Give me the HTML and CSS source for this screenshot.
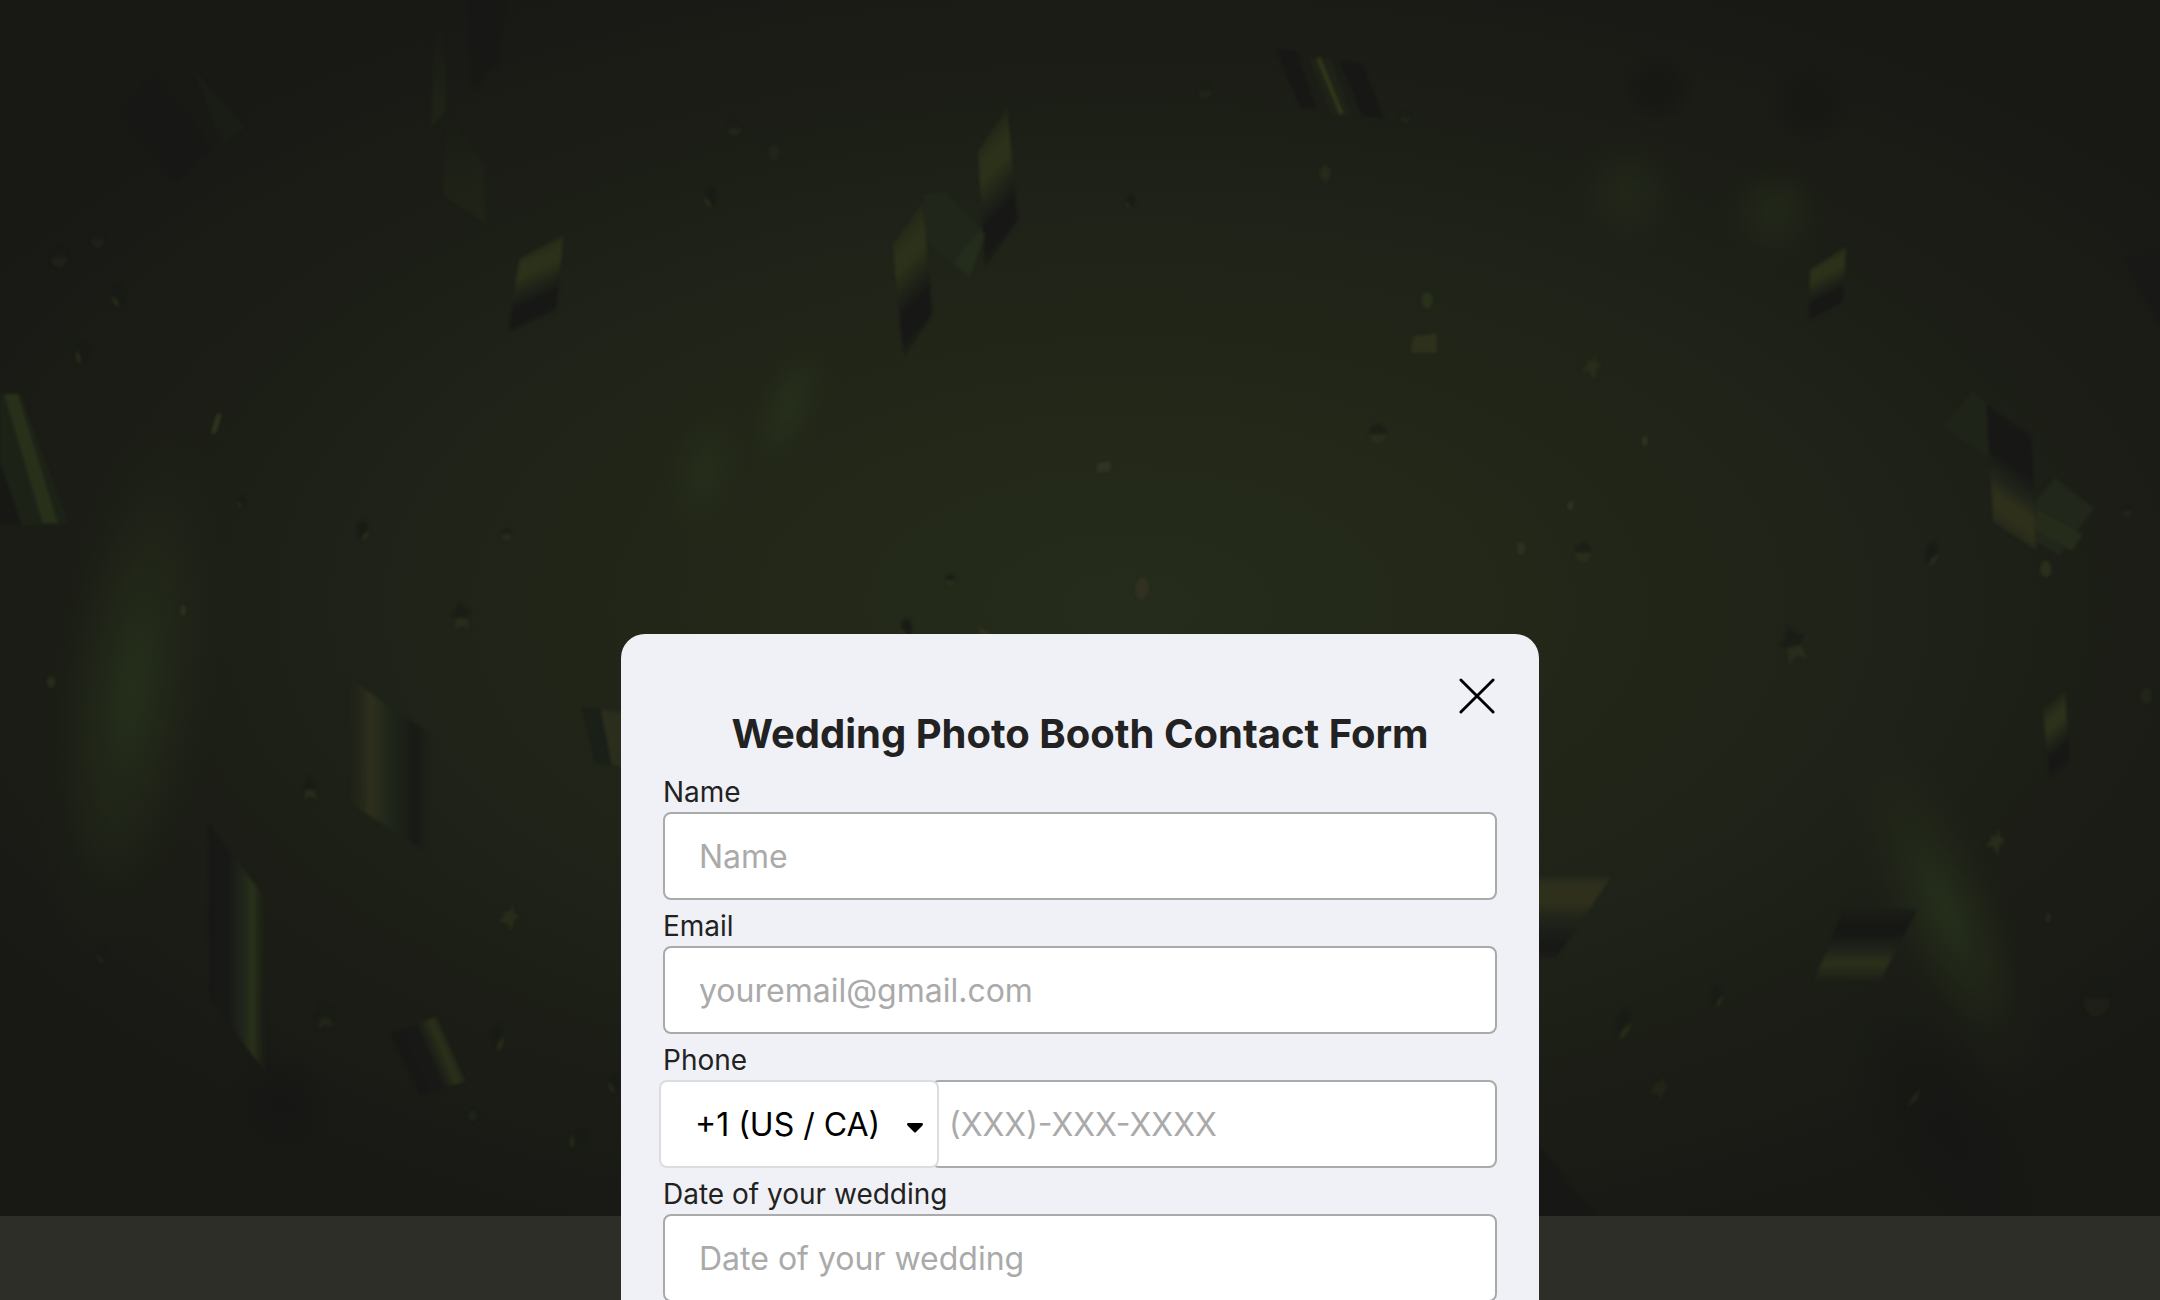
FILE: index.html
```html
<!DOCTYPE html>
<html lang="en">
<head>
  <meta charset="UTF-8">
  <meta name="viewport" content="width=device-width, initial-scale=1">
  <title>Wedding Photo Booth</title>
  <link rel="stylesheet" href="styles.css">
</head>
<body>
  <div class="hero">
    <svg class="confetti" viewBox="0 0 1568 883" preserveAspectRatio="xMidYMin slice" aria-hidden="true">
      <defs>
        <radialGradient id="glow" gradientUnits="userSpaceOnUse" cx="0" cy="0" r="1" gradientTransform="translate(820 440) scale(960 500)">
          <stop offset="0" stop-color="#252c1b"/>
          <stop offset="0.38" stop-color="#222618"/>
          <stop offset="0.62" stop-color="#1e2118"/>
          <stop offset="0.85" stop-color="#1a1c15"/>
          <stop offset="1" stop-color="#181815"/>
        </radialGradient>
        <radialGradient id="haze">
          <stop offset="0" stop-color="#27321b"/>
          <stop offset="0.4" stop-color="#252e1a" stop-opacity="0.7"/>
          <stop offset="0.75" stop-color="#222918" stop-opacity="0.2"/>
          <stop offset="1" stop-color="#222918" stop-opacity="0"/>
        </radialGradient>
        <radialGradient id="shade">
          <stop offset="0" stop-color="#161614"/>
          <stop offset="0.4" stop-color="#161614" stop-opacity="0.8"/>
          <stop offset="1" stop-color="#161614" stop-opacity="0"/>
        </radialGradient>
        <linearGradient id="down" x1="0.37" y1="0" x2="0.63" y2="1">
          <stop offset="0.05" stop-color="#2b3119" stop-opacity="0"/>
          <stop offset="0.24" stop-color="#2a301a"/>
          <stop offset="0.36" stop-color="#2c3219"/>
          <stop offset="0.52" stop-color="#1f2318"/>
          <stop offset="0.65" stop-color="#171815"/>
          <stop offset="0.8" stop-color="#171815"/>
          <stop offset="1" stop-color="#1c1f17" stop-opacity="0.4"/>
        </linearGradient>
        <linearGradient id="up" x1="0.62" y1="0" x2="0.38" y2="1">
          <stop offset="0.05" stop-color="#171815" stop-opacity="0.4"/>
          <stop offset="0.2" stop-color="#171815"/>
          <stop offset="0.42" stop-color="#171815"/>
          <stop offset="0.58" stop-color="#20251a"/>
          <stop offset="0.68" stop-color="#2f301b"/>
          <stop offset="0.8" stop-color="#2d2f1b"/>
          <stop offset="1" stop-color="#22271a" stop-opacity="0.2"/>
        </linearGradient>
        <linearGradient id="flatDown" x1="0" y1="0" x2="0" y2="1">
          <stop offset="0" stop-color="#20281a"/>
          <stop offset="0.12" stop-color="#2f301c"/>
          <stop offset="0.32" stop-color="#2f301c"/>
          <stop offset="0.5" stop-color="#20251a"/>
          <stop offset="0.85" stop-color="#171815"/>
          <stop offset="1" stop-color="#1a1c16"/>
        </linearGradient>
        <linearGradient id="flatUp" x1="0" y1="0" x2="0" y2="1">
          <stop offset="0" stop-color="#1a1c16"/>
          <stop offset="0.2" stop-color="#171815"/>
          <stop offset="0.35" stop-color="#171815"/>
          <stop offset="0.6" stop-color="#20241a"/>
          <stop offset="0.75" stop-color="#2a3119"/>
          <stop offset="1" stop-color="#1c2017"/>
        </linearGradient>
        <linearGradient id="lightDark" x1="0" y1="0" x2="1" y2="0">
          <stop offset="0" stop-color="#1f2318" stop-opacity="0"/>
          <stop offset="0.27" stop-color="#2e301b"/>
          <stop offset="0.5" stop-color="#20261a"/>
          <stop offset="0.82" stop-color="#171a15"/>
          <stop offset="1" stop-color="#1d2117"/>
        </linearGradient>
        <linearGradient id="darkLight" x1="0" y1="0" x2="1" y2="0">
          <stop offset="0.05" stop-color="#171815"/>
          <stop offset="0.35" stop-color="#181916"/>
          <stop offset="0.6" stop-color="#20251a"/>
          <stop offset="0.78" stop-color="#2a3119"/>
          <stop offset="1" stop-color="#1c2017" stop-opacity="0.2"/>
        </linearGradient>
        <linearGradient id="slant" x1="0.05" y1="0.4" x2="0.95" y2="0">
          <stop offset="0.15" stop-color="#171815"/>
          <stop offset="0.4" stop-color="#181916"/>
          <stop offset="0.6" stop-color="#2a3119"/>
          <stop offset="0.75" stop-color="#1c2017"/>
        </linearGradient>
        <linearGradient id="fade" x1="0" y1="0" x2="0" y2="1">
          <stop offset="0" stop-color="#1f2417" stop-opacity="0"/>
          <stop offset="1" stop-color="#1f2417"/>
        </linearGradient>
        <filter id="edge" color-interpolation-filters="sRGB">
          <feGaussianBlur stdDeviation="1"/>
        </filter>
        <g id="dot">
          <path d="M-6 0a6 7 0 0 1 12 0z" fill="#1a1e17"/>
          <path d="M-6 0a6 7 0 0 0 12 0z" fill="#2b2f1e"/>
        </g>
        <g id="flake">
          <ellipse cx="1" cy="-1" rx="4" ry="7" fill="#181b16"/>
          <path d="M-4 -2q0 7 5 9q1 -2 -1 -5z" fill="#2b301b"/>
        </g>
        <path id="star" d="M3 -10l1 7l4 2l-4 3l-2 8l-3 -6l-6 -1l4 -4l0 -4l4 1z" fill="#2b301b"/>
        <g id="twoStar">
          <path d="M-1 -11l3 6l5 1l-4 5h-7l-4 -1l4 -4z" fill="#191c16"/>
          <path d="M-4 2h8l2 8l-6 -3l-5 4z" fill="#2b2f1e"/>
        </g>
      </defs>

      <rect width="1568" height="883" fill="url(#glow)"/>

      <!-- out of focus pieces -->
      <ellipse cx="96" cy="500" rx="62" ry="200" fill="url(#haze)" opacity="0.8" transform="rotate(8 96 500)"/>
      <ellipse cx="572" cy="296" rx="30" ry="66" fill="url(#haze)" opacity="0.8" transform="rotate(22 572 296)"/>
      <ellipse cx="512" cy="342" rx="36" ry="62" fill="url(#haze)" opacity="0.6" transform="rotate(12 512 342)"/>
      <ellipse cx="1412" cy="660" rx="46" ry="140" fill="url(#haze)" opacity="0.8" transform="rotate(-24 1412 660)"/>
      <ellipse cx="1415" cy="822" rx="54" ry="125" fill="url(#shade)" opacity="0.8" transform="rotate(-32 1415 822)"/>
      <ellipse cx="1182" cy="140" rx="42" ry="46" fill="url(#haze)" opacity="0.4"/>
      <ellipse cx="1288" cy="154" rx="40" ry="40" fill="url(#haze)" opacity="0.5"/>
      <circle cx="1203" cy="64" r="28" fill="url(#shade)" opacity="0.8"/>
      <circle cx="1313" cy="76" r="32" fill="url(#shade)" opacity="0.8"/>
      <ellipse cx="205" cy="803" rx="38" ry="42" fill="url(#shade)" opacity="0.8" transform="rotate(-20 205 803)"/>

      <!-- ribbons -->
      <g filter="url(#edge)">
        <path d="M112 54l40 52l-24 26l-42 -50z" fill="#171815"/>
        <path d="M140 50l38 42l-16 14z" fill="#1a1d15"/>
        <path d="M315 14l8 10l1 56l-11 12z" fill="url(#fade)"/>
        <path d="M324 80l28 40v41l-30 -19z" fill="url(#fade)"/>
        <path d="M340 0h27l-6 46l-18 19z" fill="#171815"/>
        <path d="M377 188l32 -17l-5 54l-35 16z" fill="url(#down)"/>
        <path d="M710 110l21 -32l8 82l-24 34z" fill="url(#down)"/>
        <path d="M671 141l15 -2l29 31l-12 33l-30 -28z" fill="#20271a"/>
        <path d="M693 190l19 -24l3 6l-11 29z" fill="#242c1b"/>
        <path d="M648 178l22 -32l7 82l-21 32z" fill="url(#down)"/>
        <path d="M926 36l15 1l15 42h-12z" fill="#171815"/>
        <path d="M972 44l17 2l16 40l-16 -2z" fill="#171815"/>
        <path d="M950 42l16 0l15 42h-14z" fill="#1e2217"/>
        <path d="M957 42l17 41" stroke="#333719" stroke-width="3"/>
        <path d="M1314 196l26 -17l-2 40l-25 14z" fill="url(#down)"/>
        <path d="M1410 310l22 -26l10 9l1 39z" fill="#1f2418"/>
        <path d="M1477 364l15 -17l28 22l-25 34l-17 -10z" fill="#21271a"/>
        <path d="M1478 370l34 18l-8 12l-26 -16z" fill="#252d1a"/>
        <path d="M1442 293l33 23l3 83l-31 -20z" fill="url(#up)"/>
        <path d="M1542 187l26 -6v56z" fill="#181916"/>
        <path d="M0 286h15l35 94l-50 2z" fill="#1d2217"/>
        <path d="M0 335l16 46h-16z" fill="#171815"/>
        <path d="M3 286h10l29 94h-11z" fill="#28301a"/>
        <path d="M252 491l60 42v87l-58 -37z" fill="url(#lightDark)"/>
        <path d="M151 597l42 56v126l-41 -55z" fill="url(#darkLight)"/>
        <path d="M283 750l34 -12l21 47l-33 10z" fill="url(#slant)"/>
        <path d="M422 513l30 4v40l-20 -3z" fill="#1a1f17"/>
        <path d="M436 515l16 2v40l-8 -2z" fill="#2b2e1d"/>
        <path d="M1100 636h70l-40 59h-30z" fill="url(#flatDown)"/>
        <path d="M1338 660h54l-27 52h-48z" fill="url(#flatUp)"/>
        <path d="M1483 515l16 -13l4 55l-15 11z" fill="url(#down)"/>
        <path d="M1117 831l41 52h-41z" fill="#171815"/>
      </g>

      <!-- small pieces -->
      <g opacity="0.85" filter="url(#edge)">
        <use href="#dot" x="1000" y="315"/>
        <use href="#dot" x="1149" y="401"/>
        <use href="#dot" x="43" y="187" opacity="0.5"/>
        <use href="#dot" transform="translate(71 174) scale(0.8)" opacity="0.5"/>
        <use href="#dot" transform="translate(368 388) scale(0.6)"/>
        <use href="#dot" transform="translate(533 93) scale(0.8)" opacity="0.6"/>
        <use href="#dot" transform="translate(875 66) scale(0.8)" opacity="0.5"/>
        <use href="#dot" transform="translate(1020 85) scale(0.6)" opacity="0.5"/>
        <use href="#dot" transform="translate(1544 371) scale(0.6)" opacity="0.6"/>
        <use href="#dot" transform="translate(690 421) scale(0.6)"/>
        <use href="#dot" transform="translate(1522 725) scale(1.6 1.9)" opacity="0.4"/>
        <use href="#flake" x="85" y="216"/>
        <use href="#flake" transform="translate(59 257) rotate(20)"/>
        <use href="#flake" x="515" y="144"/>
        <use href="#flake" transform="translate(175 365) scale(0.6)"/>
        <use href="#flake" transform="translate(264 386) scale(-1 1)"/>
        <use href="#flake" transform="translate(820 147) scale(0.7)"/>
        <use href="#flake" transform="translate(1403 403) rotate(12) scale(-1 1.2)"/>
        <use href="#flake" transform="translate(1179 744) rotate(12) scale(-1.2 1.5)"/>
        <use href="#flake" transform="translate(1247 724) scale(-0.9 1)"/>
        <use href="#flake" transform="translate(362 754) scale(-1 1.3)"/>
        <use href="#flake" transform="translate(445 787) scale(0.9)"/>
        <use href="#flake" transform="translate(418 827) rotate(35)"/>
        <use href="#flake" transform="translate(657 457)"/>
        <use href="#flake" transform="translate(74 694) scale(0.9)" opacity="0.6"/>
        <use href="#star" x="1155" y="266"/>
        <use href="#star" x="369" y="666"/>
        <use href="#star" x="1448" y="611"/>
        <use href="#star" x="1204" y="790" opacity="0.5"/>
        <use href="#twoStar" x="335" y="447"/>
        <use href="#twoStar" transform="translate(225 572) scale(0.8)"/>
        <use href="#twoStar" transform="translate(236 737)" opacity="0.6"/>
        <use href="#twoStar" transform="translate(1302 467) rotate(-12) scale(1.3)"/>
        <ellipse cx="829" cy="427" rx="5" ry="8" fill="#333322" transform="rotate(8 829 427)"/>
        <ellipse cx="1036" cy="218" rx="4" ry="6" fill="#2b351d"/>
        <path d="M1026 244l17 -2v14h-19z" fill="#30341e"/>
        <path d="M797 336l9 -1v7l-10 1z" fill="#343625"/>
        <ellipse cx="962" cy="126" rx="4" ry="6" fill="#282c1b"/>
        <ellipse cx="562" cy="111" rx="4" ry="6" fill="#22261a"/>
        <path d="M157 301l4 -1l-4 14l-4 1z" fill="#333a20"/>
        <ellipse cx="1194" cy="320" rx="2" ry="4" fill="#333822"/>
        <ellipse cx="1104" cy="398" rx="3" ry="5" fill="#303421"/>
        <ellipse cx="1140" cy="367" rx="2" ry="3" fill="#333824"/>
        <ellipse cx="1485" cy="413" rx="4" ry="6" fill="#2e331c"/>
        <ellipse cx="1558" cy="505" rx="4" ry="6" fill="#23281a"/>
        <ellipse cx="1487" cy="666" rx="2" ry="4" fill="#262b1c"/>
        <ellipse cx="37" cy="495" rx="3" ry="4" fill="#2a301d"/>
        <ellipse cx="133" cy="443" rx="2" ry="4" fill="#2f3520"/>
        <ellipse cx="343" cy="810" rx="3" ry="4" fill="#21251c"/>
        <path d="M1388 796l6 -6l-2 8l-8 6z" fill="#24291c"/>
        <path d="M710 454l14 10h-12z" fill="#333422"/>
      </g>
    </svg>
  </div>

  <div class="modal">
    <form class="panel">
      <button class="close" type="button" aria-label="Close">
        <svg viewBox="0 0 38 38"><path d="M2 2l34 34M36 2l-34 34"/></svg>
      </button>
      <h2 class="title">Wedding Photo Booth Contact Form</h2>
      <div class="field">
        <label for="name">Name</label>
        <input class="text" id="name" type="text" placeholder="Name">
      </div>
      <div class="field">
        <label for="email">Email</label>
        <input class="text" id="email" type="email" placeholder="youremail@gmail.com">
      </div>
      <div class="field">
        <label for="phone">Phone</label>
        <div class="phone">
          <div class="code">
            <select aria-label="Country code">
              <option>+1 (US / CA)</option>
            </select>
            <svg class="caret" viewBox="0 0 16 10"><path d="M1 0h14q2 1 0 3l-6 6q-1 1 -2 0l-6 -6q-2 -2 0 -3z"/></svg>
          </div>
          <input class="text number" id="phone" type="tel" placeholder="(XXX)-XXX-XXXX">
        </div>
      </div>
      <div class="field">
        <label for="date">Date of your wedding</label>
        <input class="text" id="date" type="text" placeholder="Date of your wedding">
      </div>
    </form>
  </div>
</body>
</html>
```

FILE: styles.css
```css
*{
  box-sizing: border-box;
}
body{
  margin: 0;
  min-height: 100vh;
  background: #2e2e29;
  color: #222;
  font-family: Inter, "Liberation Sans", sans-serif;
  font-optical-sizing: none;
}
.hero{
  aspect-ratio: 135 / 76;
  overflow: hidden;
}
.confetti{
  display: block;
  width: 100%;
  height: 100%;
}
.modal{
  position: fixed;
  inset: 0;
  display: flex;
  justify-content: center;
  align-items: flex-start;
  padding-top: 634px;
  overflow: hidden;
}
.panel{
  position: relative;
  width: 100%;
  max-width: 918px;
  padding: 76px 42px 42px;
  border-radius: 24px;
  background: #f0f1f6;
}
.close{
  position: absolute;
  top: 42px;
  right: 42px;
  width: 40px;
  height: 40px;
  padding: 2px;
  border: 0;
  background: none;
  cursor: pointer;
}
.close svg{
  display: block;
  fill: none;
  stroke: #000;
  stroke-width: 3;
  stroke-linecap: round;
}
.title{
  margin: 0 0 8px;
  font-size: 40px;
  line-height: 48px;
  font-weight: 700;
  text-align: center;
}
.field label{
  display: block;
  padding: 8px 0 2px;
  font-size: 28px;
  line-height: 36px;
}
.text{
  display: block;
  width: 100%;
  height: 88px;
  padding: 0 34px;
  border: 2px solid #aaa;
  border-radius: 8px;
  background: #fff;
  color: #000;
  font: inherit;
  font-size: 32px;
}
.text::placeholder{
  color: #aaa;
  opacity: 1;
}
.phone{
  display: flex;
  margin-left: -4px;
}
.code{
  position: relative;
  z-index: 1;
  width: 280px;
}
.code select{
  appearance: none;
  width: 100%;
  height: 88px;
  padding: 0 34px;
  border: 2px solid #ddd;
  border-radius: 8px;
  background: #fff;
  color: #000;
  font: inherit;
  font-size: 32px;
}
.caret{
  position: absolute;
  right: 16px;
  top: 43px;
  width: 16px;
  pointer-events: none;
}
.number{
  flex: 1;
  width: auto;
  margin-left: -8px;
  padding-left: 16px;
}
```
